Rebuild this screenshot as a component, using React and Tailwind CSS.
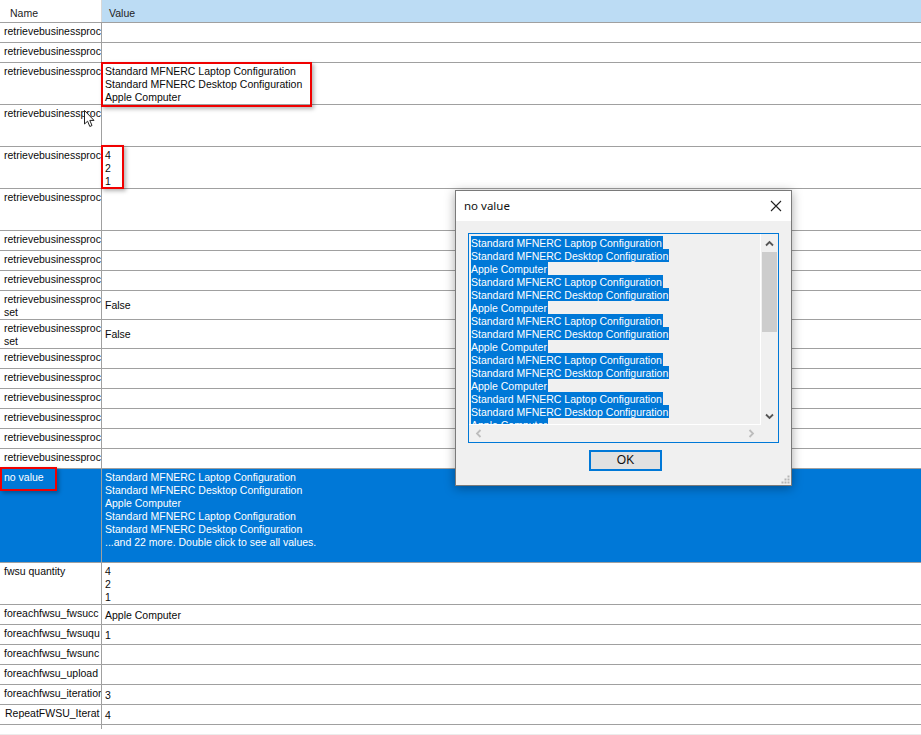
const FONT = "font-['Liberation_Sans',Arial,sans-serif]";

const cfg = ["Standard MFNERC Laptop Configuration", "Standard MFNERC Desktop Configuration", "Apple Computer"];
const N = "retrievebusinessproc";

const rows = [
  { h: "h-[20px]", name: [N], value: [] },
  { h: "h-[20px]", name: [N], value: [] },
  { h: "h-[42px]", name: [N], value: cfg },
  { h: "h-[42px]", name: [N], value: [] },
  { h: "h-[42px]", name: [N], value: ["4", "2", "1"] },
  { h: "h-[42px]", name: [N], value: [] },
  { h: "h-[20px]", name: [N], value: [] },
  { h: "h-[20px]", name: [N], value: [] },
  { h: "h-[20px]", name: [N], value: [] },
  { h: "h-[29px]", name: [N, "set"], value: ["False"], pad: "pt-[8px]" },
  { h: "h-[29px]", name: [N, "set"], value: ["False"], pad: "pt-[8px]" },
  { h: "h-[20px]", name: [N], value: [] },
  { h: "h-[20px]", name: [N], value: [] },
  { h: "h-[20px]", name: [N], value: [] },
  { h: "h-[20px]", name: [N], value: [] },
  { h: "h-[20px]", name: [N], value: [] },
  { h: "h-[20px]", name: [N], value: [] },
  {
    h: "h-[94px]",
    name: ["no value"],
    selected: true,
    value: [...cfg, cfg[0], cfg[1], "...and 22 more. Double click to see all values."],
  },
  { h: "h-[42px]", name: ["fwsu quantity"], value: ["4", "2", "1"] },
  { h: "h-[20px]", name: ["foreachfwsu_fwsucc"], value: ["Apple Computer"], pad: "pt-[4px]" },
  { h: "h-[20px]", name: ["foreachfwsu_fwsuqu"], value: ["1"], pad: "pt-[4px]" },
  { h: "h-[20px]", name: ["foreachfwsu_fwsunc"], value: [] },
  { h: "h-[20px]", name: ["foreachfwsu_upload"], value: [] },
  { h: "h-[20px]", name: ["foreachfwsu_iteration"], value: ["3"], pad: "pt-[4px]" },
  { h: "h-[20px]", name: ["RepeatFWSU_Iterat"], value: ["4"], pad: "pt-[4px]", indent: true },
];

function Row({ row }) {
  const colors = row.selected ? "bg-[#0078d7] text-white" : "bg-white text-[#0a0a0a]";
  return (
    <div className={`flex ${row.h} border-b border-[#a0a0a0] ${colors}`}>
      <div className={`w-[102px] shrink-0 overflow-hidden whitespace-nowrap border-r border-[#a0a0a0] pt-[2px] ${row.indent ? "pl-[5px]" : "pl-[4px]"}`}>
        {row.name.map((t, i) => (
          <div key={i} className="h-[13px] leading-[13px]">{t}</div>
        ))}
      </div>
      <div className={`flex-1 pl-[3px] ${row.pad || "pt-[2px]"}`}>
        {row.value.map((t, i) => (
          <div key={i} className="h-[13px] leading-[13px] whitespace-nowrap">{t}</div>
        ))}
      </div>
    </div>
  );
}

function RedBox({ className }) {
  return (
    <div className={`absolute border-[2px] border-[#f00000] shadow-[2px_2px_4px_rgba(0,0,0,0.3)] ${className}`} />
  );
}

function Dialog() {
  const lines = [];
  for (let i = 0; i < 6; i++) lines.push(...cfg);
  return (
    <div className="absolute left-[455px] top-[190px] flex h-[296px] w-[337px] flex-col border border-[#7a7a7a] bg-[#f0f0f0] shadow-[0_2px_10px_rgba(0,0,0,0.35)]">
      <div className="flex h-[30px] shrink-0 items-center justify-between bg-white pl-[8px] pr-[9px]">
        <span className="font-['Noto_Sans',sans-serif] text-[11.5px] text-[#111]">no value</span>
        <svg width="12" height="12" viewBox="0 0 12 12" fill="none" stroke="#222" strokeWidth="1.1">
          <path d="M1 1 L11 11 M11 1 L1 11" />
        </svg>
      </div>
      <div className="flex flex-1 flex-col items-center px-[12px] pt-[12px]">
        <div className="flex h-[210px] w-[311px] shrink-0 flex-col border border-[#0078d7]">
          <div className="flex h-[191px] shrink-0">
            <div className="flex-1 overflow-hidden border-b border-r border-white pl-[2px] pt-[2px]">
              {lines.map((t, i) => (
                <div key={i} className="h-[13px] leading-[13px]">
                  <span className="inline-block h-[13px] overflow-hidden whitespace-nowrap bg-[#0078d7] pr-[1px] leading-[15px] text-white">{t}</span>
                </div>
              ))}
            </div>
            <div className="flex w-[17px] shrink-0 flex-col items-center">
              <svg className="mt-[5px] h-[9px] w-[9px]" viewBox="0 0 9 9" fill="none" stroke="#555" strokeWidth="1.8">
                <path d="M1 6.5 L4.5 3 L8 6.5" />
              </svg>
              <div className="mt-[4px] h-[80px] w-[15px] bg-[#cdcdcd]" />
              <div className="flex-1" />
              <svg className="mb-[4px] h-[9px] w-[9px]" viewBox="0 0 9 9" fill="none" stroke="#555" strokeWidth="1.8">
                <path d="M1 2.5 L4.5 6 L8 2.5" />
              </svg>
            </div>
          </div>
          <div className="flex h-[17px] w-[292px] items-center justify-between px-[5px]">
            <svg className="h-[9px] w-[9px]" viewBox="0 0 9 9" fill="none" stroke="#bdbdbd" strokeWidth="1.8">
              <path d="M6.5 1 L3 4.5 L6.5 8" />
            </svg>
            <svg className="h-[9px] w-[9px]" viewBox="0 0 9 9" fill="none" stroke="#bdbdbd" strokeWidth="1.8">
              <path d="M2.5 1 L6 4.5 L2.5 8" />
            </svg>
          </div>
        </div>
        <button className="ml-[4px] mt-[7px] h-[21px] w-[73px] shrink-0 border-[2px] border-[#0078d7] bg-[#e1e1e1] text-[12px] leading-[15px] text-[#111]">
          OK
        </button>
      </div>
      <svg className="absolute bottom-[1px] right-[1px] h-[9px] w-[9px]" viewBox="0 0 9 9" fill="#b5b5b5">
        <rect x="6.5" y="0.5" width="2" height="2" />
        <rect x="3.5" y="3.5" width="2" height="2" />
        <rect x="6.5" y="3.5" width="2" height="2" />
        <rect x="0.5" y="6.5" width="2" height="2" />
        <rect x="3.5" y="6.5" width="2" height="2" />
        <rect x="6.5" y="6.5" width="2" height="2" />
      </svg>
    </div>
  );
}

export default function App() {
  return (
    <div className={`relative flex h-[735px] w-[921px] flex-col overflow-hidden bg-white text-[10.5px] ${FONT}`}>
      <div className="flex h-[23px] shrink-0 border-b border-[#a0a0a0]">
        <div className="w-[102px] shrink-0 border-r border-[#d8d8d8] bg-white pl-[10px] pt-[7px] leading-[13px] text-[#222]">Name</div>
        <div className="flex-1 bg-[#bcdcf4] pl-[7px] pt-[7px] leading-[13px] text-[#222]">Value</div>
      </div>
      {rows.map((row, i) => (
        <Row key={i} row={row} />
      ))}
      <div className="h-[4px] w-[102px] shrink-0 border-r border-[#a0a0a0]" />
      <div className="h-[5px] shrink-0 bg-white" />
      <div className="flex-1 bg-[#ececec]" />

      <RedBox className="left-[101px] top-[62px] h-[45px] w-[211px]" />
      <RedBox className="left-[101px] top-[145px] h-[44px] w-[23px]" />
      <RedBox className="left-0 top-[467px] h-[24px] w-[57px]" />

      <svg className="absolute left-[83px] top-[109px] h-[19px] w-[13px]" viewBox="0 0 13 19">
        <path d="M1.5 1.5 V15 L4.6 12.2 L6.8 17.5 L9 16.5 L6.8 11.4 H11 Z" fill="#fff" stroke="#222" strokeWidth="1" />
      </svg>

      <Dialog />
    </div>
  );
}
